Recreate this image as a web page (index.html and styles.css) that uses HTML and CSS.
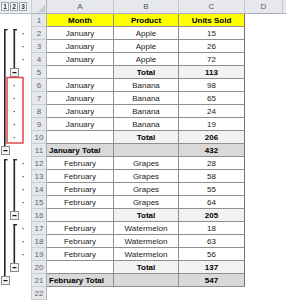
FILE: index.html
```html
<!DOCTYPE html>
<html>
<head>
<meta charset="utf-8">
<link rel="stylesheet" href="styles.css">
</head>
<body>
<div class="sheet">
  <div class="lvl-head"><span class="lvl">1</span><span class="lvl">2</span><span class="lvl">3</span></div>
  <div class="corner"><span class="tri"></span></div>
  <div class="ch">A</div><div class="ch">B</div><div class="ch">C</div><div class="ch">D</div><div class="ch ch-end"></div>

  <div class="outline">
    <svg width="31" height="286" viewBox="0 0 31 286" xmlns="http://www.w3.org/2000/svg">
      <g fill="#262626">
        <!-- level 1, January -->
        <rect x="4" y="15" width="1.6" height="117"/>
        <rect x="4" y="15" width="3.5" height="1.4"/>
        <!-- level 2, rows 2-4 -->
        <rect x="13.5" y="15" width="1.6" height="39"/>
        <rect x="13.5" y="15" width="3.5" height="1.4"/>
        <!-- level 1, February -->
        <rect x="4" y="145" width="1.6" height="117"/>
        <rect x="4" y="145" width="3.5" height="1.4"/>
        <!-- level 2, rows 12-15 -->
        <rect x="13.5" y="145" width="1.6" height="52"/>
        <rect x="13.5" y="145" width="3.5" height="1.4"/>
        <!-- level 2, rows 17-19 -->
        <rect x="13.5" y="210" width="1.6" height="39"/>
        <rect x="13.5" y="210" width="3.5" height="1.4"/>
      </g>
      <g fill="#444">
        <rect x="22.5" y="19" width="1.2" height="1.2"/>
        <rect x="22.5" y="32" width="1.2" height="1.2"/>
        <rect x="22.5" y="45" width="1.2" height="1.2"/>
        <rect x="13.7" y="71" width="1.2" height="1.2"/>
        <rect x="13.7" y="84" width="1.2" height="1.2"/>
        <rect x="13.7" y="97" width="1.2" height="1.2"/>
        <rect x="13.7" y="110" width="1.2" height="1.2"/>
        <rect x="13.7" y="123" width="1.2" height="1.2"/>
        <rect x="22.5" y="149" width="1.2" height="1.2"/>
        <rect x="22.5" y="162" width="1.2" height="1.2"/>
        <rect x="22.5" y="175" width="1.2" height="1.2"/>
        <rect x="22.5" y="188" width="1.2" height="1.2"/>
        <rect x="22.5" y="214" width="1.2" height="1.2"/>
        <rect x="22.5" y="227" width="1.2" height="1.2"/>
        <rect x="22.5" y="240" width="1.2" height="1.2"/>
      </g>
      <g stroke="#8c8c8c" fill="#f3f3f3" stroke-width="1">
        <rect x="10.5" y="54.5" width="8" height="8"/>
        <rect x="1.5" y="132.5" width="8" height="8"/>
        <rect x="10.5" y="197.5" width="8" height="8"/>
        <rect x="10.5" y="249.5" width="8" height="8"/>
        <rect x="1.5" y="262.5" width="8" height="8"/>
      </g>
      <g fill="#111">
        <rect x="12.5" y="58" width="4" height="1.2"/>
        <rect x="3.5" y="136" width="4" height="1.2"/>
        <rect x="12.5" y="201" width="4" height="1.2"/>
        <rect x="12.5" y="253" width="4" height="1.2"/>
        <rect x="3.5" y="266" width="4" height="1.2"/>
      </g>
      <rect x="7" y="63.5" width="16" height="65.5" fill="none" stroke="#e0484a" stroke-width="1.5"/>
    </svg>
  </div>

  <div class="rh">1</div><div class="c hd">Month</div><div class="c hd">Product</div><div class="c hd last">Units Sold</div><div class="c e"></div><div class="c e"></div>
  <div class="rh">2</div><div class="c">January</div><div class="c">Apple</div><div class="c last">15</div><div class="c e"></div><div class="c e"></div>
  <div class="rh">3</div><div class="c">January</div><div class="c">Apple</div><div class="c last">26</div><div class="c e"></div><div class="c e"></div>
  <div class="rh">4</div><div class="c">January</div><div class="c">Apple</div><div class="c last">72</div><div class="c e"></div><div class="c e"></div>
  <div class="rh">5</div><div class="c"></div><div class="c st">Total</div><div class="c st last">113</div><div class="c e"></div><div class="c e"></div>
  <div class="rh">6</div><div class="c">January</div><div class="c">Banana</div><div class="c last">98</div><div class="c e"></div><div class="c e"></div>
  <div class="rh">7</div><div class="c">January</div><div class="c">Banana</div><div class="c last">65</div><div class="c e"></div><div class="c e"></div>
  <div class="rh">8</div><div class="c">January</div><div class="c">Banana</div><div class="c last">24</div><div class="c e"></div><div class="c e"></div>
  <div class="rh">9</div><div class="c">January</div><div class="c">Banana</div><div class="c last">19</div><div class="c e"></div><div class="c e"></div>
  <div class="rh">10</div><div class="c"></div><div class="c st">Total</div><div class="c st last">206</div><div class="c e"></div><div class="c e"></div>
  <div class="rh">11</div><div class="c gt left">January Total</div><div class="c gt"></div><div class="c gt last">432</div><div class="c e"></div><div class="c e"></div>
  <div class="rh">12</div><div class="c">February</div><div class="c">Grapes</div><div class="c last">28</div><div class="c e"></div><div class="c e"></div>
  <div class="rh">13</div><div class="c">February</div><div class="c">Grapes</div><div class="c last">58</div><div class="c e"></div><div class="c e"></div>
  <div class="rh">14</div><div class="c">February</div><div class="c">Grapes</div><div class="c last">55</div><div class="c e"></div><div class="c e"></div>
  <div class="rh">15</div><div class="c">February</div><div class="c">Grapes</div><div class="c last">64</div><div class="c e"></div><div class="c e"></div>
  <div class="rh">16</div><div class="c"></div><div class="c st">Total</div><div class="c st last">205</div><div class="c e"></div><div class="c e"></div>
  <div class="rh">17</div><div class="c">February</div><div class="c">Watermelon</div><div class="c last">18</div><div class="c e"></div><div class="c e"></div>
  <div class="rh">18</div><div class="c">February</div><div class="c">Watermelon</div><div class="c last">63</div><div class="c e"></div><div class="c e"></div>
  <div class="rh">19</div><div class="c">February</div><div class="c">Watermelon</div><div class="c last">56</div><div class="c e"></div><div class="c e"></div>
  <div class="rh">20</div><div class="c"></div><div class="c st">Total</div><div class="c st last">137</div><div class="c e"></div><div class="c e"></div>
  <div class="rh">21</div><div class="c gt left">February Total</div><div class="c gt"></div><div class="c gt last">547</div><div class="c e"></div><div class="c e"></div>
  <div class="rh">22</div><div class="c e"></div><div class="c e"></div><div class="c e"></div><div class="c e"></div><div class="c e"></div>
</div>
</body>
</html>
```

FILE: styles.css
```css
html, body {
  margin: 0;
  padding: 0;
  background: #ffffff;
}

.sheet {
  width: 286px;
  height: 300px;
  display: grid;
  grid-template-columns: 31px 16px 67px 65px 66px 38px 1fr;
  grid-template-rows: 14px repeat(22, 13px);
  font-family: "Liberation Sans", Arial, sans-serif;
  font-size: 8px;
  color: #1a1a1a;
  overflow: hidden;
}

.lvl-head {
  background: #eceef1;
  border-bottom: 1px solid #b4bac3;
  box-sizing: border-box;
  display: flex;
  align-items: flex-start;
  gap: 1px;
  padding: 2px 0 0 1px;
}

.lvl {
  width: 8px;
  height: 9px;
  box-sizing: border-box;
  border: 1px solid #9ba2ac;
  background: #f8f8f8;
  font-size: 6.5px;
  line-height: 7px;
  text-align: center;
  color: #333;
  font-weight: bold;
}

.corner {
  background: #e6e8ec;
  border-bottom: 1px solid #a9b0ba;
  border-right: 1px solid #a9b0ba;
  border-left: 1px solid #c9ced5;
  box-sizing: border-box;
  display: flex;
  align-items: flex-end;
  justify-content: flex-end;
  padding: 0 1px 1px 0;
}

.tri {
  width: 0;
  height: 0;
  border-left: 7px solid transparent;
  border-bottom: 7px solid #c4c9d0;
}

.ch {
  background: #e6e8ec;
  border-bottom: 1px solid #a9b0ba;
  border-right: 1px solid #c3c8cf;
  box-sizing: border-box;
  display: flex;
  align-items: center;
  justify-content: center;
  color: #555a60;
  font-size: 8px;
}

.ch-end {
  border-right: none;
}

.outline {
  grid-column: 1;
  grid-row: 2 / span 22;
  background: #ffffff;
}

.outline svg {
  display: block;
}

.rh {
  grid-column: 2;
  background: #e6e8ec;
  border-bottom: 1px solid #c9ced5;
  border-right: 1px solid #a9b0ba;
  border-left: 1px solid #c9ced5;
  box-sizing: border-box;
  display: flex;
  align-items: center;
  justify-content: center;
  color: #5f646a;
  font-size: 8px;
}

.c {
  box-sizing: border-box;
  border-right: 1px solid #8f8f8f;
  border-bottom: 1px solid #8f8f8f;
  display: flex;
  align-items: center;
  justify-content: center;
  background: #ffffff;
  white-space: nowrap;
  overflow: visible;
}

.c.last {
  border-right: 1px solid #6f6f6f;
}

.c.e {
  border: none;
}

.hd {
  background: #ffff00;
  font-weight: bold;
  color: #000;
}

.st {
  background: #f2f2f2;
  font-weight: bold;
  color: #000;
}

.gt {
  background: #d9d9d9;
  font-weight: bold;
  color: #000;
}

.left {
  justify-content: flex-start;
  padding-left: 2px;
}
```
